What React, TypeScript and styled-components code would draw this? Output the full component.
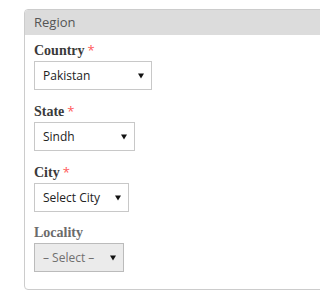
import styled, { createGlobalStyle } from "styled-components";

const GlobalStyle = createGlobalStyle`
  html, body {
    margin: 0;
    padding: 0;
    background: #ffffff;
    overflow: hidden;
  }
`;

type Field = {
  label: string;
  value: string;
  width: number;
  required?: boolean;
  disabled?: boolean;
};

const fields: Field[] = [
  { label: "Country", value: "Pakistan", width: 118, required: true },
  { label: "State", value: "Sindh", width: 101, required: true },
  { label: "City", value: "Select City", width: 95, required: true },
  { label: "Locality", value: "– Select –", width: 90, disabled: true },
];

function App() {
  return (
    <Page>
      <GlobalStyle />
      <Fieldset>
        <Legend>Region</Legend>
        <FieldList>
          {fields.map((f) => (
            <FieldGroup key={f.label}>
              <Label $disabled={f.disabled}>
                {f.label}
                {f.required && <Required>*</Required>}
              </Label>
              <SelectWrap $width={f.width}>
                <Select disabled={f.disabled} $disabled={f.disabled} defaultValue={f.value}>
                  <option value={f.value}>{f.value}</option>
                </Select>
                <Arrow viewBox="0 0 6 6">
                  <path d="M0 0.5 H6 L3 5.5 Z" fill="#111" />
                </Arrow>
              </SelectWrap>
            </FieldGroup>
          ))}
        </FieldList>
      </Fieldset>
    </Page>
  );
}

export default App;

const Page = styled.div`
  height: 300px;
  padding: 9px 0 0 24px;
  box-sizing: border-box;
  overflow: hidden;
`;
const Fieldset = styled.div`
  width: 600px;
  height: 281px;
  box-sizing: border-box;
  border: 1px solid #cccccc;
  border-radius: 4px;
  overflow: hidden;
`;
const Legend = styled.div`
  height: 25px;
  padding-left: 9px;
  background: #dcdcdc;
  color: #555555;
  font-family: "Open Sans", sans-serif;
  font-size: 13px;
  line-height: 25px;
`;
const FieldList = styled.div`
  display: flex;
  flex-direction: column;
  gap: 12px;
  padding: 6px 0 0 9px;
`;
const FieldGroup = styled.div`
  display: flex;
  flex-direction: column;
  align-items: flex-start;
  gap: 1px;
`;
const Label = styled.div<{ $disabled?: boolean }>`
  font-family: "Liberation Serif", "Times New Roman", serif;
  font-weight: bold;
  font-size: 14px;
  line-height: 18px;
  color: ${(p) => (p.$disabled ? "#6b6b6b" : "#3a3a3a")};
`;
const Required = styled.span`
  margin-left: 3px;
  color: #ff5a5a;
  font-family: "Open Sans", sans-serif;
  font-weight: normal;
  font-size: 13px;
`;
const SelectWrap = styled.div<{ $width: number }>`
  position: relative;
  width: ${(p) => p.$width}px;
  height: 29px;
`;
const Select = styled.select<{ $disabled?: boolean }>`
  appearance: none;
  width: 100%;
  height: 100%;
  margin: 0;
  padding: 0 0 0 8px;
  box-sizing: border-box;
  border: 1px solid ${(p) => (p.$disabled ? "#bbbbbb" : "#c8c8c8")};
  border-radius: 0;
  background: ${(p) => (p.$disabled ? "#ebebeb" : "#ffffff")};
  color: ${(p) => (p.$disabled ? "#707070" : "#222222")};
  font-family: "Open Sans", sans-serif;
  font-size: 12px;
  opacity: 1;
`;
const Arrow = styled.svg`
  position: absolute;
  right: 8px;
  top: 12px;
  width: 6px;
  height: 6px;
  pointer-events: none;
`;
